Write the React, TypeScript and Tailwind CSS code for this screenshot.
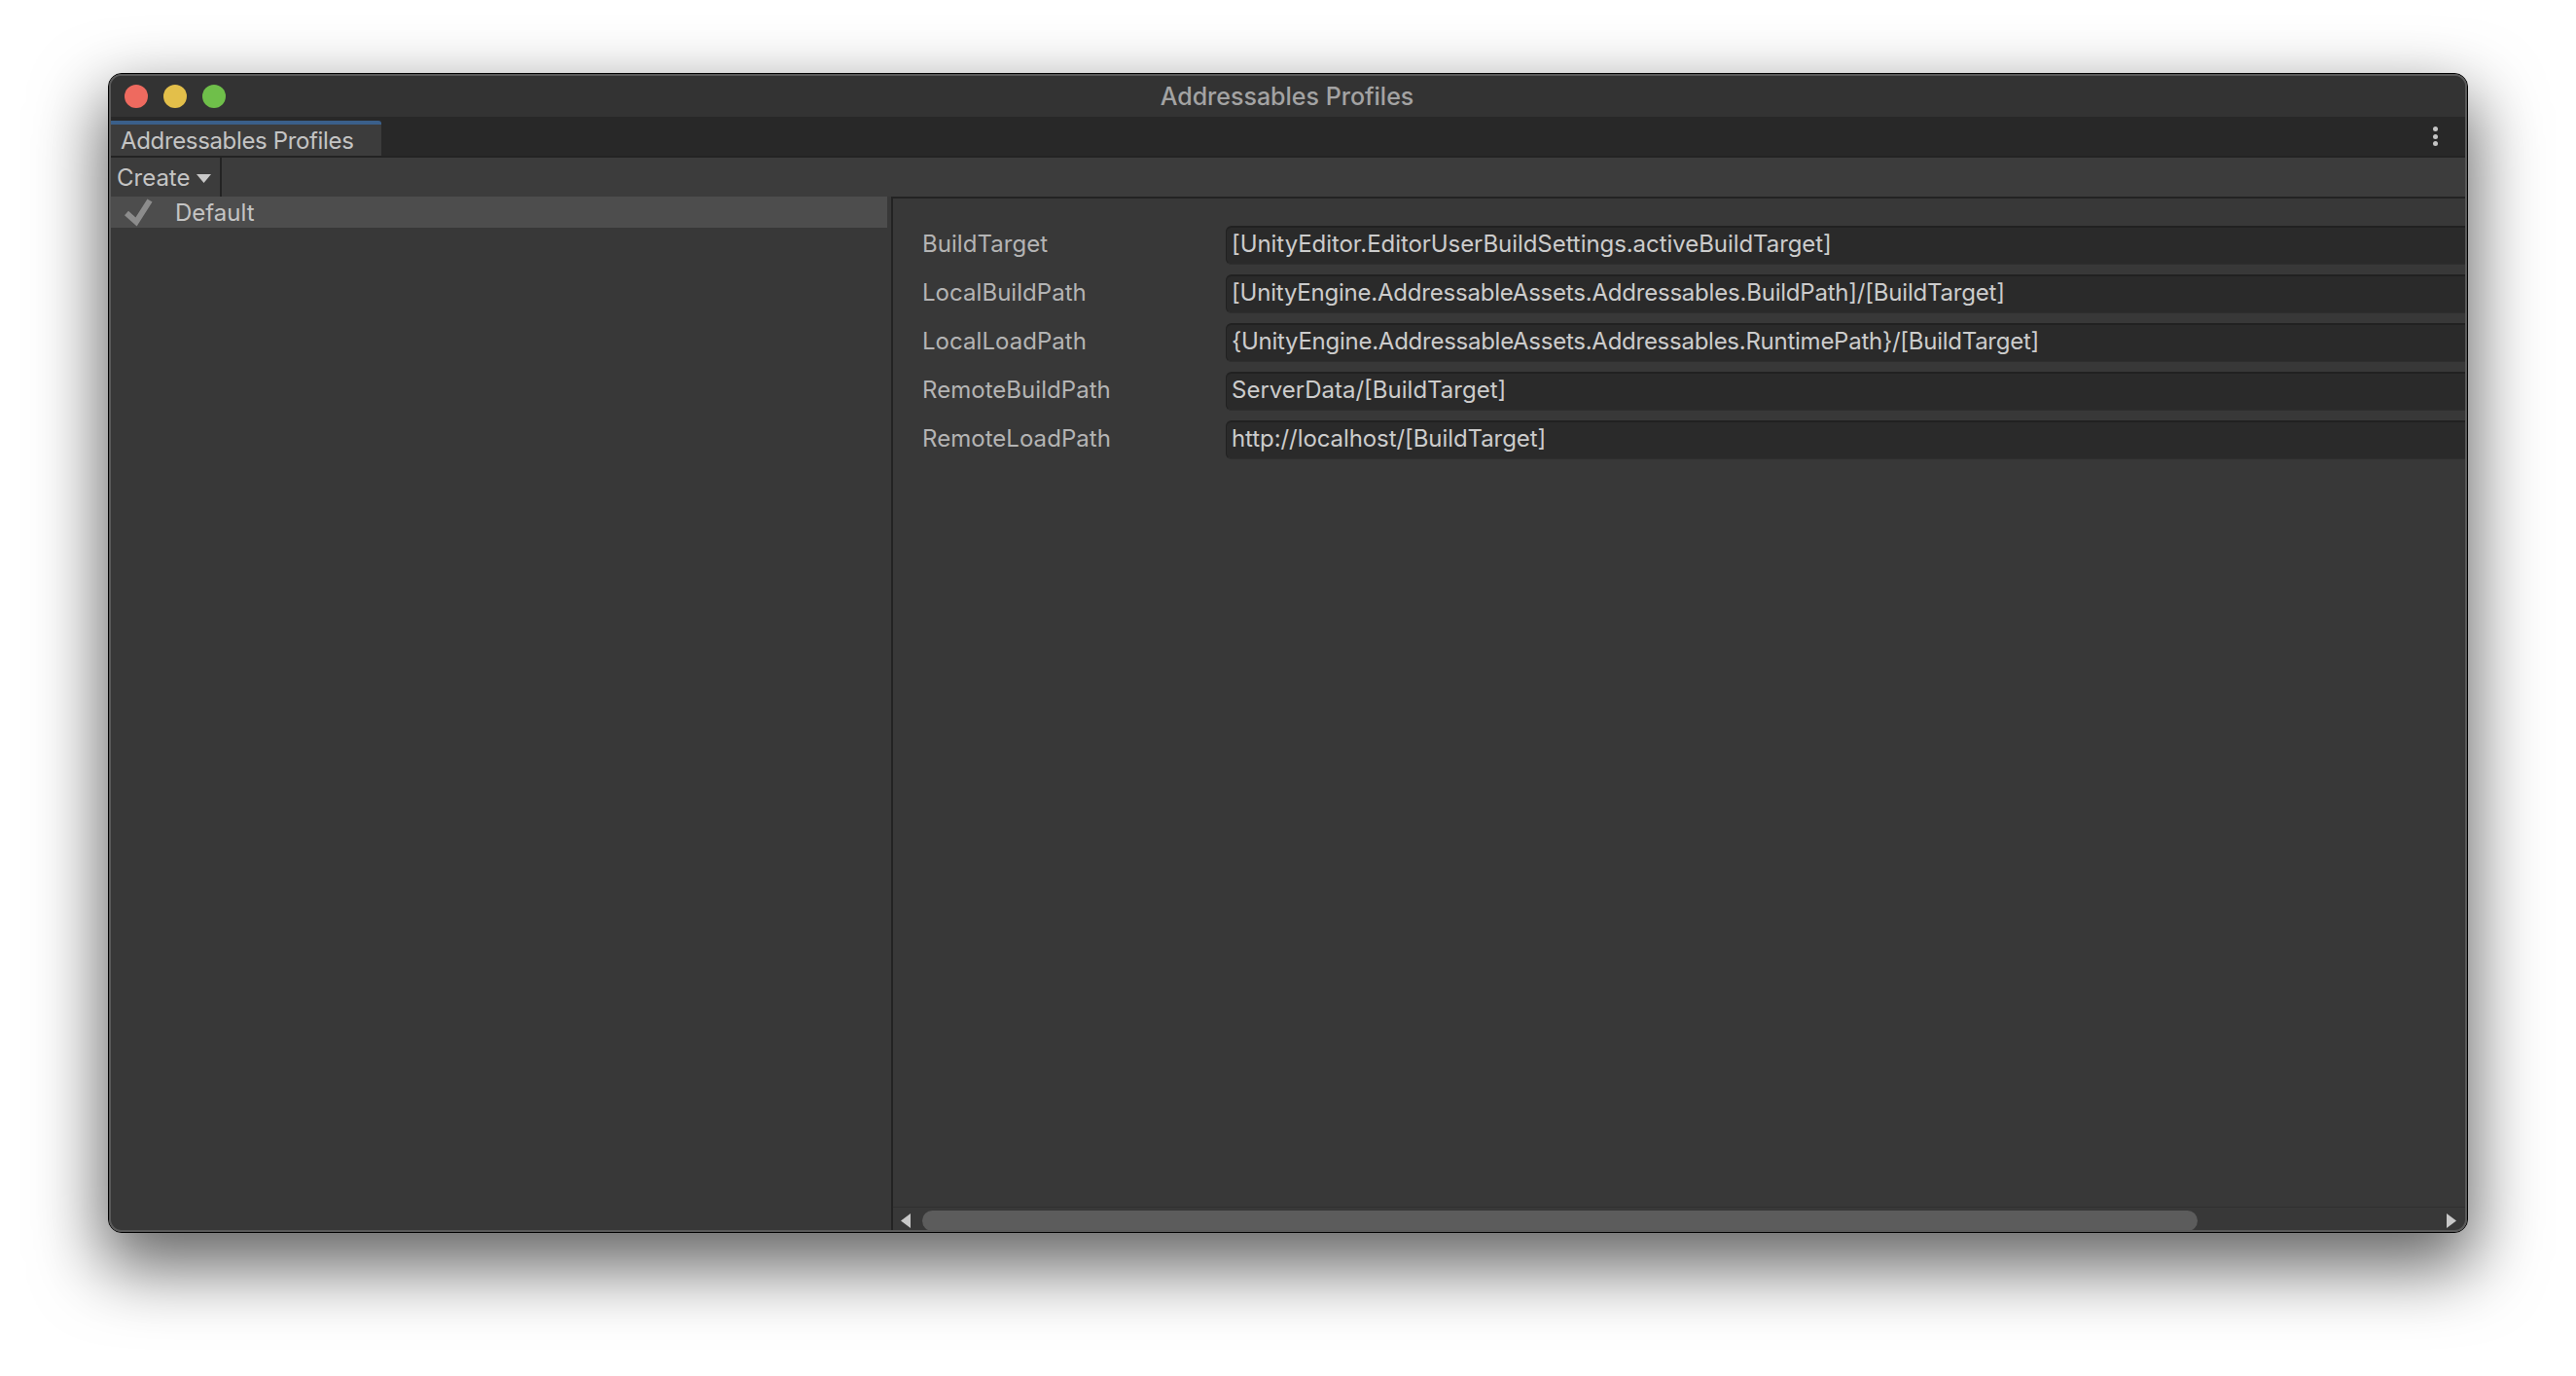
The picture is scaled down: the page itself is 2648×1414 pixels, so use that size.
const fields: [string, string, string][] = [
  ["BuildTarget", "[UnityEditor.EditorUserBuildSettings.activeBuildTarget]", "tracking-[-0.06px]"],
  ["LocalBuildPath", "[UnityEngine.AddressableAssets.Addressables.BuildPath]/[BuildTarget]", "tracking-[-0.21px]"],
  ["LocalLoadPath", "{UnityEngine.AddressableAssets.Addressables.RuntimePath}/[BuildTarget]", "tracking-[-0.26px]"],
  ["RemoteBuildPath", "ServerData/[BuildTarget]", "tracking-[0px]"],
  ["RemoteLoadPath", "http://localhost/[BuildTarget]", "tracking-[-0.08px]"],
];

export default function App() {
  return (
    <div className="h-[1414px] w-[2648px] overflow-hidden bg-white pl-[111px] pt-[75px] font-['Inter',sans-serif] text-[24px] leading-none text-[#c4c4c4]">
      <div className="h-[1192px] w-[2426px] rounded-[14px] border border-black bg-[#5a5a5a] shadow-[0_30px_70px_6px_rgba(0,0,0,0.6)]">
        <div className="flex h-full w-full flex-col overflow-hidden rounded-[13px] border-2 border-[#5a5a5a] bg-[#383838]">
          {/* Title bar */}
          <div className="relative flex h-[42px] shrink-0 items-center bg-[#333333] pl-[14px]">
            <div className="flex gap-4">
              <span className="h-6 w-6 rounded-full bg-[#ee6a5f]" />
              <span className="h-6 w-6 rounded-full bg-[#e3bf4a]" />
              <span className="h-6 w-6 rounded-full bg-[#6fbf4a]" />
            </div>
            <span className="absolute inset-x-0 top-[9px] pr-[2px] text-center text-[25px] font-medium text-[#a3a3a3]">Addressables Profiles</span>
          </div>
          {/* Tab bar */}
          <div className="flex h-[42px] shrink-0 items-stretch justify-between border-b-2 border-[#232323] bg-[#282828]">
            <div className="mt-1 flex w-[278px] items-center rounded-tr-[3px] border-t-4 border-[#3a5f8a] bg-[#3c3c3c] pl-[10px] pt-[2px] tracking-[-0.35px]">
              Addressables Profiles
            </div>
            <div className="mr-[28px] flex flex-col justify-center gap-[2.5px]">
              <span className="h-[5px] w-[5px] rounded-full bg-[#c4c4c4]" />
              <span className="h-[5px] w-[5px] rounded-full bg-[#c4c4c4]" />
              <span className="h-[5px] w-[5px] rounded-full bg-[#c4c4c4]" />
            </div>
          </div>
          {/* Toolbar */}
          <div className="flex h-[40px] shrink-0 bg-[#3c3c3c]">
            <div className="flex w-[114px] items-center border-r-2 border-[#232323] pl-[6px] pt-[2px]">
              <span>Create</span>
              <svg className="ml-[7px]" width="15" height="9" viewBox="0 0 15 9">
                <path d="M0 0H15L7.5 9Z" fill="#c8c8c8" />
              </svg>
            </div>
          </div>
          {/* Main */}
          <div className="flex min-h-0 flex-1">
            <div className="w-[802px] shrink-0 pr-1">
              <div className="flex h-[32px] items-center bg-[#4d4d4d]">
                <svg className="ml-[14px] shrink-0" width="30" height="30" viewBox="0 0 30 30">
                  <path d="M2 16L12 25L26 3" fill="none" stroke="#8c8c8c" strokeWidth="6" />
                </svg>
                <span className="ml-[22px] pt-[2px]">Default</span>
              </div>
            </div>
            <div className="flex min-w-0 flex-1 flex-col border-l-2 border-t-2 border-[#232323]">
              <div className="flex min-h-0 flex-1 flex-col gap-[10px] overflow-hidden pt-[28px]">
                {fields.map(([label, value, track]) => (
                  <div key={label} className="flex h-[40px] shrink-0 items-center">
                    <span className="w-[342px] shrink-0 pb-[2px] pl-[30px] tracking-[0.04px] text-[#b4b4b4]">{label}</span>
                    <div className={`flex h-[40px] min-w-0 flex-1 items-center whitespace-nowrap rounded-l-[6px] border-y border-l border-t-2 border-[#212121] border-b-[#2e2e2e] bg-[#2a2a2a] pb-[3px] pl-[5px] text-[#cccccc] ${track}`}>
                      {value}
                    </div>
                  </div>
                ))}
              </div>
              {/* Scrollbar */}
              <div className="flex h-[24px] shrink-0 items-start border-t border-[#303030] pl-[8px] pt-[3px]">
                <svg className="mt-[3px] shrink-0" width="10" height="15" viewBox="0 0 10 15">
                  <path d="M10 0V15L0 7.5Z" fill="#c8c8c8" />
                </svg>
                <div className="ml-[12px] h-[21px] w-[1311px] shrink-0 rounded-full bg-[#5c5c5c]" />
                <svg className="ml-auto mr-[9px] mt-[3px] shrink-0" width="10" height="15" viewBox="0 0 10 15">
                  <path d="M0 0V15L10 7.5Z" fill="#c8c8c8" />
                </svg>
              </div>
            </div>
          </div>
        </div>
      </div>
    </div>
  );
}
